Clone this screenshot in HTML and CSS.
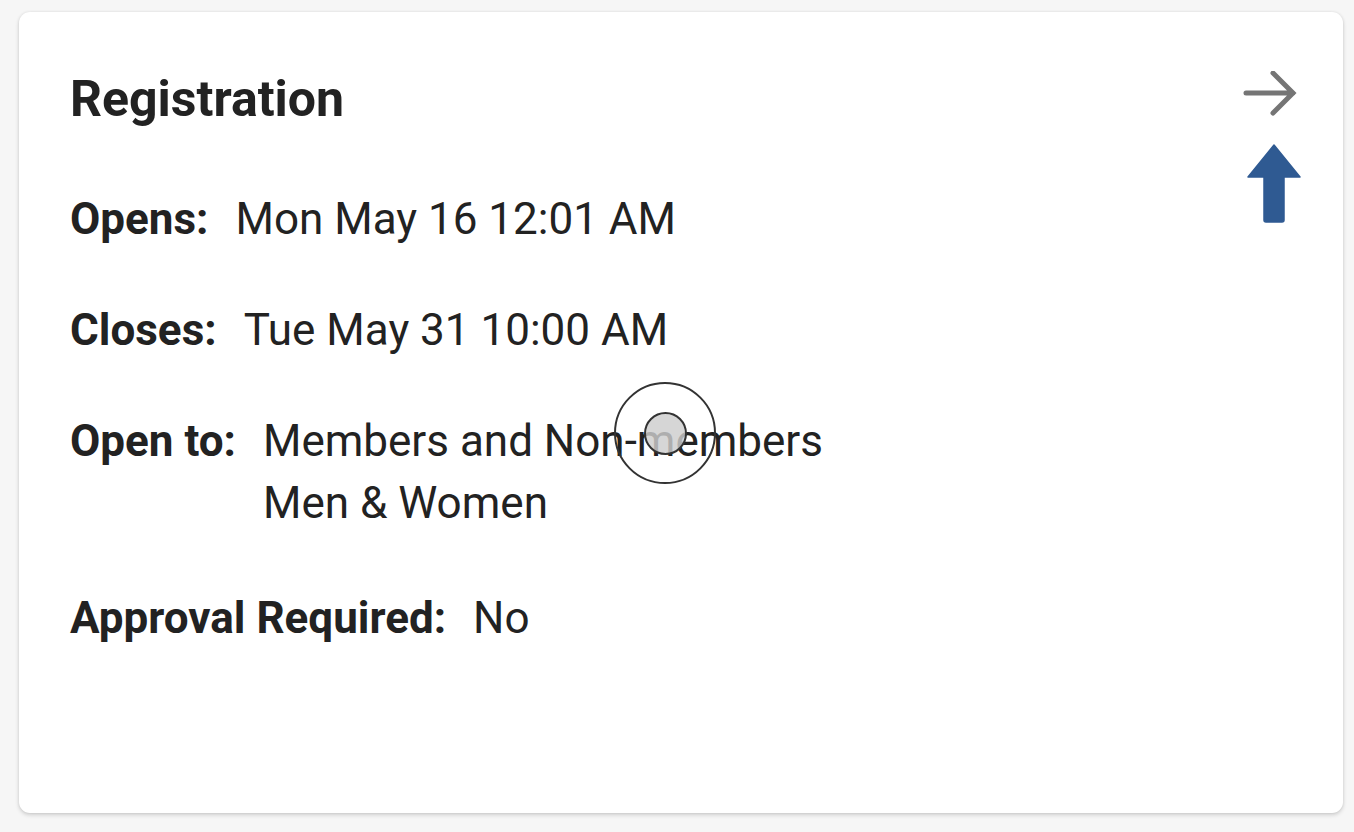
FILE: index.html
```html
<!DOCTYPE html>
<html lang="en">
<head>
<meta charset="utf-8">
<title>Registration</title>
<link rel="stylesheet" href="styles.css">
</head>
<body>
<div class="card">
  <div class="main">
    <h2 class="title">Registration</h2>
    <div class="rows">
      <div class="row"><span class="label">Opens:</span><div class="value">Mon May 16 12:01 AM</div></div>
      <div class="row"><span class="label">Closes:</span><div class="value">Tue May 31 10:00 AM</div></div>
      <div class="row row-multi"><span class="label">Open to:</span><div class="value"><div>Members and Non-members</div><div>Men &amp; Women</div></div></div>
      <div class="row"><span class="label">Approval Required:</span><div class="value">No</div></div>
    </div>
  </div>
  <div class="icons">
    <svg class="icon-next" width="56" height="50" viewBox="0 0 56 50" aria-hidden="true">
      <path d="M4 22 H51 M31 2 L51 22 L31 42" fill="none" stroke="#757575" stroke-width="5" stroke-linecap="round" stroke-linejoin="miter"/>
    </svg>
    <svg class="icon-up" width="54" height="80" viewBox="0 0 54 80" aria-hidden="true">
      <path d="M27 1 L53 33 L37 33 L37 76 Q37 78 35 78 L19 78 Q17 78 17 76 L17 33 L1 33 Z" fill="#2f5a92" stroke="#2f5a92" stroke-width="1.5" stroke-linejoin="round"/>
    </svg>
  </div>
  <div class="touch"><div class="touch-dot"></div></div>
</div>
</body>
</html>
```
FILE: styles.css
```css
html, body {
  margin: 0;
  padding: 0;
}
body {
  background: #f6f6f6;
  font-family: Roboto, "Liberation Sans", Arial, sans-serif;
  color: #222222;
  padding: 12px 11px 19px 19px;
  box-sizing: border-box;
  height: 832px;
  overflow: hidden;
}
.card {
  position: relative;
  background: #ffffff;
  border-radius: 11px;
  height: 801px;
  box-sizing: border-box;
  padding: 59px 42px 0 51px;
  display: grid;
  grid-template-columns: 1fr auto;
  align-items: start;
  box-shadow: 0 2px 4px rgba(0,0,0,0.16), 0 0 3px rgba(0,0,0,0.08);
}
.title {
  margin: 0 0 61px 0;
  font-size: 50px;
  font-weight: 700;
  line-height: 56px;
}
.icons {
  display: flex;
  flex-direction: column;
  align-items: flex-end;
  gap: 23px;
}
.icon-next { display: block; margin-right: 3px; }
.icon-up { display: block; }
.rows {
  display: flex;
  flex-direction: column;
  gap: 49px;
}
.row {
  display: flex;
  gap: 27px;
  font-size: 44px;
  line-height: 62px;
}
.row-multi {
  margin-bottom: 4px;
}
.label {
  font-weight: 700;
}
.value {
  font-weight: 400;
}
.touch {
  position: absolute;
  left: 595px;
  top: 370px;
  width: 98px;
  height: 98px;
  border: 2px solid #333;
  border-radius: 50%;
  display: flex;
  align-items: center;
  justify-content: center;
}
.touch-dot {
  width: 39px;
  height: 39px;
  border: 2px solid #333;
  border-radius: 50%;
  background: rgba(205, 205, 205, 0.82);
}
```
